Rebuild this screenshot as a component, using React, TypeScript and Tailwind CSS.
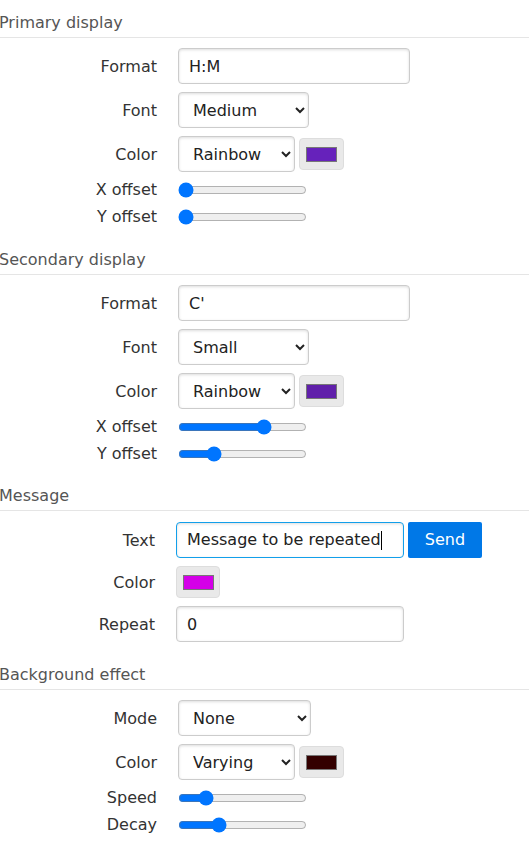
import React from 'react';

const font = { fontFamily: '"DejaVu Sans", Inter, sans-serif' };

function Header({ title, gap = 10 }: { title: string; gap?: number }) {
  return (
    <div style={{ marginBottom: gap }} className="pt-[5px] pb-[5px] border-b border-[#e5e5e5] text-[16px] leading-[19px] text-[#555] -ml-[1px]">
      {title}
    </div>
  );
}

function Row({ label, lw = 157, slim = false, children }: { label: string; lw?: number; slim?: boolean; children: React.ReactNode }) {
  return (
    <div className={slim ? 'flex items-center h-[19px] mb-[8px]' : 'flex items-center mb-[8px]'}>
      <div style={{ width: lw }} className="text-right text-[16px] leading-[19px] text-[#333] shrink-0">{label}</div>
      <div className="ml-[21px] flex items-center gap-[4px]">{children}</div>
    </div>
  );
}

function TextInput({ value, w }: { value: string; w: number }) {
  return (
    <input
      readOnly
      value={value}
      style={{ width: w }}
      className="h-[36px] px-[10px] border border-[#ccc] rounded-[4px] shadow-[inset_0_1px_3px_#ddd] text-[16px] text-[#222] bg-white outline-none"
    />
  );
}

function Select({ value, options, w }: { value: string; options: string[]; w: number }) {
  return (
    <select
      value={value}
      onChange={() => {}}
      style={{ width: w }}
      className="h-[36px] pl-[10px] pr-[4px] border border-[#ccc] rounded-[4px] shadow-[inset_0_1px_3px_#ddd] text-[16px] text-[#222] bg-white outline-none"
    >
      {options.map(o => <option key={o}>{o}</option>)}
    </select>
  );
}

function Swatch({ color, w = 45 }: { color: string; w?: number }) {
  return (
    <div style={{ width: w }} className="h-[32px] rounded-[4px] bg-[#e9e9e9] border border-[#ddd] flex items-center justify-center">
      <div style={{ backgroundColor: color }} className="w-[31px] h-[15px] border border-[#777]" />
    </div>
  );
}

function Range({ value }: { value: number }) {
  return <input type="range" min={0} max={100} defaultValue={value} className="w-[129px] h-[16px] m-0" />;
}

export default function App() {
  return (
    <div style={font} className="bg-white w-[529px] min-h-[844px] pt-[8px] overflow-hidden">
      <div className="pb-[11px]">
        <Header title="Primary display" />
        <Row label="Format"><TextInput value="H:M" w={232} /></Row>
        <Row label="Font"><Select value="Medium" options={['Small', 'Medium', 'Large']} w={131} /></Row>
        <Row label="Color">
          <Select value="Rainbow" options={['Fixed', 'Rainbow', 'Varying']} w={117} />
          <Swatch color="#6622bb" />
        </Row>
        <Row label="X offset" slim><Range value={0} /></Row>
        <Row label="Y offset" slim><Range value={0} /></Row>
      </div>

      <div className="pb-[10px]">
        <Header title="Secondary display" />
        <Row label="Format"><TextInput value="C'" w={232} /></Row>
        <Row label="Font"><Select value="Small" options={['Small', 'Medium', 'Large']} w={131} /></Row>
        <Row label="Color">
          <Select value="Rainbow" options={['Fixed', 'Rainbow', 'Varying']} w={117} />
          <Swatch color="#6020aa" />
        </Row>
        <Row label="X offset" slim><Range value={69} /></Row>
        <Row label="Y offset" slim><Range value={25} /></Row>
      </div>

      <div className="pb-[10px]">
        <Header title="Message" gap={11} />
        <Row label="Text" lw={155}>
          <div className="w-[228px] h-[36px] px-[10px] border border-[#129fea] rounded-[4px] shadow-[inset_0_1px_3px_#ddd] text-[16px] text-[#222] bg-white flex items-center whitespace-nowrap">
            Message to be repeated<span className="inline-block w-px h-[19px] bg-black" />
          </div>
          <button className="w-[74px] h-[36px] rounded-[2px] bg-[#0078e7] text-white text-[16px]">Send</button>
        </Row>
        <Row label="Color" lw={155}><Swatch color="#d400e8" w={44} /></Row>
        <Row label="Repeat" lw={155}><TextInput value="0" w={228} /></Row>
      </div>

      <div>
        <Header title="Background effect" />
        <Row label="Mode"><Select value="None" options={['None', 'Fire', 'Rain']} w={133} /></Row>
        <Row label="Color">
          <Select value="Varying" options={['Fixed', 'Rainbow', 'Varying']} w={117} />
          <Swatch color="#330000" />
        </Row>
        <Row label="Speed" slim><Range value={18} /></Row>
        <Row label="Decay" slim><Range value={29} /></Row>
      </div>
    </div>
  );
}
